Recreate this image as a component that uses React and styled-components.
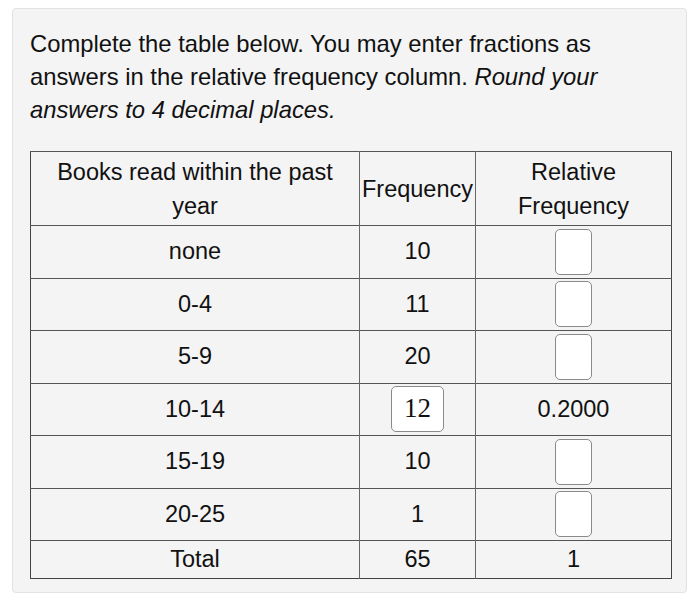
import React from 'react'
import styled, { createGlobalStyle } from 'styled-components'

const Global = createGlobalStyle`
  body {
    margin: 0;
    background: #ffffff;
    font-family: "Liberation Sans", Arial, sans-serif;
    color: #111;
  }
`

const Card = styled.div`
  box-sizing: border-box;
  margin: 8px 0 0 12px;
  width: 675px;
  height: 585px;
  padding: 18px 17px 0 17px;
  background: #f4f4f4;
  border: 1px solid #e2e2e2;
  border-radius: 4px;
`

const Prompt = styled.p`
  margin: 0;
  font-size: 23.8px;
  line-height: 33px;
`

const Table = styled.table`
  margin-top: 25px;
  width: 642px;
  border-collapse: collapse;
  table-layout: fixed;
  border: 1.5px solid #444;
  font-size: 23.5px;
`

const Row = styled.tr`
  height: ${({ $h }) => $h}px;
  border-top: 1.5px solid #555;
`

const Head = styled.th`
  font-weight: normal;
  text-align: center;
  line-height: 34px;
  padding: 0 ${({ $pad }) => $pad || 0}px;
  border-left: 1px solid #666;
  &:first-child { border-left: none; }
`

const Cell = styled.td`
  text-align: center;
  padding: 0;
  border-left: 1px solid #666;
  &:first-child { border-left: none; }
`

const AnswerBox = styled.span`
  display: inline-block;
  vertical-align: middle;
  box-sizing: border-box;
  width: ${({ $w }) => $w}px;
  height: 46px;
  background: #fff;
  border: 1.5px solid #8a8a8a;
  border-radius: 5px;
  font-family: "Liberation Serif", "Times New Roman", serif;
  font-size: 27px;
  line-height: 43px;
`

const rows = [
  ['none', '10', null],
  ['0-4', '11', null],
  ['5-9', '20', null],
  ['10-14', 'box12', '0.2000'],
  ['15-19', '10', null],
  ['20-25', '1', null],
]

export default function App() {
  return (
    <>
      <Global />
      <Card>
        <Prompt>
          Complete the table below. You may enter fractions as answers in the relative frequency column.{' '}
          <i>Round your answers to 4 decimal places.</i>
        </Prompt>
        <Table>
          <colgroup>
            <col style={{ width: 329 }} />
            <col style={{ width: 116 }} />
            <col style={{ width: 196 }} />
          </colgroup>
          <thead>
            <Row $h={74}>
              <Head $pad={20}>Books read within the past year</Head>
              <Head>Frequency</Head>
              <Head>Relative Frequency</Head>
            </Row>
          </thead>
          <tbody>
            {rows.map(([label, freq, rel]) => (
              <Row key={label} $h={52.5}>
                <Cell>{label}</Cell>
                <Cell>{freq === 'box12' ? <AnswerBox $w={53}>12</AnswerBox> : freq}</Cell>
                <Cell>{rel ? rel : <AnswerBox $w={37} />}</Cell>
              </Row>
            ))}
            <Row $h={38}>
              <Cell>Total</Cell>
              <Cell>65</Cell>
              <Cell>1</Cell>
            </Row>
          </tbody>
        </Table>
      </Card>
    </>
  )
}
